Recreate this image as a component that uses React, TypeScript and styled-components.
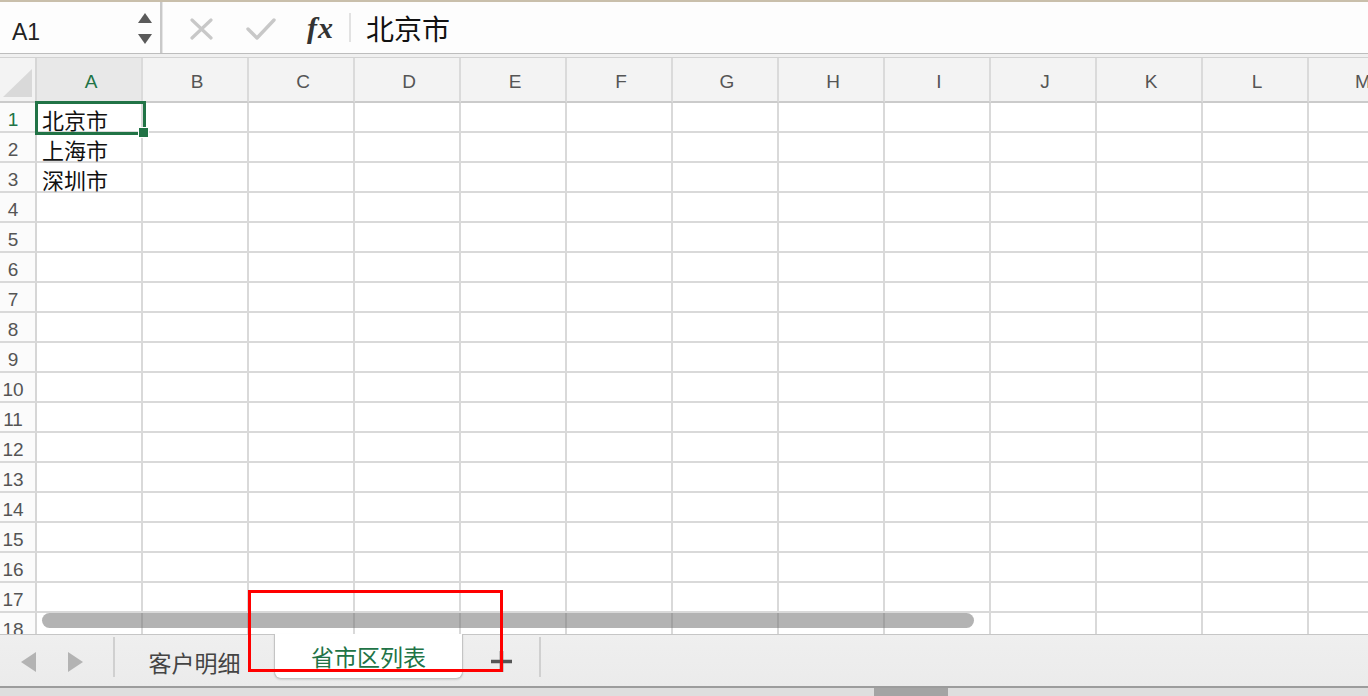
import React from "react";
import styled, { createGlobalStyle } from "styled-components";

const GREEN = "#217346";

const GlobalStyle = createGlobalStyle`
  html, body { margin: 0; padding: 0; background: #fff; overflow: hidden; }
  body { font-family: "Liberation Sans", "Noto Sans CJK SC", sans-serif; }
`;

const Window = styled.div`
  position: relative;
  width: 1368px;
  height: 696px;
  display: flex;
  flex-direction: column;
  overflow: hidden;
  background: #fff;
`;

const TopLine = styled.div`
  flex: none;
  height: 2px;
  background: #c9bfab;
`;

const FormulaBar = styled.div`
  flex: none;
  height: 51px;
  display: flex;
  align-items: center;
  background: #fdfdfd;
`;

const NameBox = styled.div`
  width: 160px;
  height: 100%;
  box-sizing: border-box;
  display: flex;
  align-items: center;
  justify-content: space-between;
  padding: 0 8px 0 12px;
`;

const NameText = styled.span`
  font-family: "Liberation Sans", sans-serif;
  font-size: 23px;
  color: #222;
  padding-top: 10px;
`;

const Stepper = styled.div`
  display: flex;
  flex-direction: column;
  gap: 11px;
  padding-top: 2px;
`;

const NameDivider = styled.div`
  width: 3px;
  height: 100%;
  background: #c9c9c9;
  border-right: 1px solid #e6e6e6;
  box-sizing: border-box;
`;

const ToolIcon = styled.span<{ $gap: number }>`
  display: flex;
  align-items: center;
  margin-left: ${(p) => p.$gap}px;
  padding-top: 3px;
`;

const FxLabel = styled.span`
  margin-left: 31px;
  font-family: "Liberation Serif", "DejaVu Serif", serif;
  font-style: italic;
  font-weight: 700;
  font-size: 30px;
  color: #333;
  letter-spacing: 1px;
`;

const FxDivider = styled.div`
  width: 2px;
  height: 29px;
  margin-left: 15px;
  background: #e2e2e2;
`;

const FormulaText = styled.div`
  margin-left: 15px;
  font-family: "Noto Sans CJK SC", sans-serif;
  font-size: 28px;
  color: #111;
`;

const BarSeparator = styled.div`
  flex: none;
  height: 5px;
  box-sizing: border-box;
  border-top: 1px solid #bdbdbd;
  border-bottom: 1px solid #d2d2d2;
  background: #f0f0f0;
`;

const GridArea = styled.div`
  position: relative;
  flex: 1;
  min-height: 0;
  overflow: hidden;
`;

const Sheet = styled.div`
  display: grid;
  grid-template-columns: 37px repeat(13, 106px);
  grid-template-rows: 45px repeat(18, 30px);
`;

const Corner = styled.div`
  position: relative;
  background: #f3f3f3;
  border-right: 2px solid #d6d6d6;
  border-bottom: 2px solid #cbcbcb;
`;

const CornerTriangle = styled.div`
  position: absolute;
  right: 3px;
  bottom: 4px;
  width: 29px;
  height: 28px;
  background: #d9d9d9;
  clip-path: polygon(100% 0, 100% 100%, 0 100%);
`;

const ColHeader = styled.div<{ $active?: boolean }>`
  display: flex;
  align-items: center;
  justify-content: center;
  padding: 5px 0 0 4px;
  box-sizing: border-box;
  background: ${(p) => (p.$active ? "#e8e8e8" : "#f3f3f3")};
  border-right: 2px solid #dadada;
  border-bottom: 2px solid #cbcbcb;
  font-family: "Liberation Sans", sans-serif;
  font-size: 19px;
  color: ${(p) => (p.$active ? GREEN : "#555")};
`;

const RowHeader = styled.div<{ $active?: boolean }>`
  display: flex;
  align-items: center;
  justify-content: center;
  padding: 5px 9px 0 0;
  box-sizing: border-box;
  background: #fbfbfb;
  border-right: 2px solid #d6d6d6;
  border-bottom: 2px solid #d9d9d9;
  font-family: "Liberation Sans", sans-serif;
  font-size: 19px;
  color: ${(p) => (p.$active ? GREEN : "#555")};
  white-space: nowrap;
`;

const Cell = styled.div`
  display: flex;
  align-items: center;
  padding: 3px 0 0 5px;
  box-sizing: border-box;
  border-right: 2px solid #d9d9d9;
  border-bottom: 2px solid #d9d9d9;
  font-family: "Noto Sans CJK SC", sans-serif;
  font-size: 22px;
  color: #111;
  white-space: nowrap;
`;

const Selection = styled.div`
  position: absolute;
  left: 35px;
  top: 43px;
  width: 111px;
  height: 34px;
  box-sizing: border-box;
  border: 3px solid ${GREEN};
  pointer-events: none;
`;

const FillHandle = styled.div`
  position: absolute;
  left: 139px;
  top: 70px;
  width: 9px;
  height: 9px;
  background: ${GREEN};
  box-shadow: 0 0 0 1px #fff;
`;

const HScroll = styled.div`
  position: absolute;
  left: 42px;
  top: 555px;
  width: 932px;
  height: 15px;
  border-radius: 8px;
  background: rgba(110, 110, 110, 0.52);
`;

const TabBar = styled.div`
  flex: none;
  height: 52px;
  box-sizing: border-box;
  border-top: 1px solid #c6c6c6;
  background: linear-gradient(#efefef, #ebebeb);
  display: flex;
  align-items: stretch;
`;

const NavArrows = styled.div`
  width: 113px;
  box-sizing: border-box;
  padding: 2px 0 0 21px;
  display: flex;
  align-items: center;
  gap: 32px;
`;

const TabDivider = styled.div`
  width: 2px;
  margin: 2px 0 9px;
  background: #d0d0d0;
`;

const SheetTab = styled.div<{ $active?: boolean; $width: number }>`
  width: ${(p) => p.$width}px;
  box-sizing: border-box;
  display: flex;
  align-items: center;
  justify-content: center;
  font-family: "Noto Sans CJK SC", sans-serif;
  font-size: 23px;
  color: ${(p) => (p.$active ? GREEN : "#444")};
  ${(p) =>
    p.$active
      ? `
    background: #fff;
    margin: -1px 0 7px;
    border: 1px solid #c4c4c4;
    border-top: none;
    border-radius: 0 0 7px 7px;
    box-shadow: 0 1px 2px rgba(0,0,0,0.12);
  `
      : `padding-top: 2px;`}
`;

const AddButton = styled.div`
  width: 76px;
  display: flex;
  align-items: center;
  justify-content: center;
  padding-top: 2px;
`;

const StatusStrip = styled.div`
  flex: none;
  height: 10px;
  box-sizing: border-box;
  border-top: 2px solid #9c9c9c;
  background: #dedede;
  display: flex;
  padding-left: 874px;
`;

const Thumb = styled.div`
  width: 74px;
  background: #a4a4a4;
`;

const Highlight = styled.div`
  position: absolute;
  left: 248px;
  top: 590px;
  width: 255px;
  height: 82px;
  box-sizing: border-box;
  border: 3px solid #ff0000;
  pointer-events: none;
`;

const COLS = "ABCDEFGHIJKLM".split("");
const ROWS = Array.from({ length: 18 }, (_, i) => i + 1);
const DATA: Record<number, string> = { 1: "北京市", 2: "上海市", 3: "深圳市" };

export default function App() {
  return (
    <>
      <GlobalStyle />
      <Window>
        <TopLine />
        <FormulaBar>
          <NameBox>
            <NameText>A1</NameText>
            <Stepper>
              <svg width="14" height="10" viewBox="0 0 14 10">
                <polygon points="7,0 14,10 0,10" fill="#5a5a5a" />
              </svg>
              <svg width="14" height="10" viewBox="0 0 14 10">
                <polygon points="0,0 14,0 7,10" fill="#5a5a5a" />
              </svg>
            </Stepper>
          </NameBox>
          <NameDivider />
          <ToolIcon $gap={27}>
            <svg width="23" height="22" viewBox="0 0 23 22">
              <path d="M2 2 L21 20 M21 2 L2 20" stroke="#c8c8c8" strokeWidth="3.2" strokeLinecap="round" />
            </svg>
          </ToolIcon>
          <ToolIcon $gap={33}>
            <svg width="30" height="22" viewBox="0 0 30 22">
              <path d="M2 11 L11 20 L28 2" stroke="#c8c8c8" strokeWidth="3.4" fill="none" strokeLinecap="round" strokeLinejoin="round" />
            </svg>
          </ToolIcon>
          <FxLabel>fx</FxLabel>
          <FxDivider />
          <FormulaText>北京市</FormulaText>
        </FormulaBar>
        <BarSeparator />
        <GridArea>
          <Sheet>
            <Corner>
              <CornerTriangle />
            </Corner>
            {COLS.map((c) => (
              <ColHeader key={c} $active={c === "A"}>
                {c}
              </ColHeader>
            ))}
            {ROWS.map((r) => (
              <React.Fragment key={r}>
                <RowHeader $active={r === 1}>{r}</RowHeader>
                {COLS.map((c) => (
                  <Cell key={c}>{c === "A" ? DATA[r] ?? "" : ""}</Cell>
                ))}
              </React.Fragment>
            ))}
          </Sheet>
          <Selection />
          <FillHandle />
          <HScroll />
        </GridArea>
        <TabBar>
          <NavArrows>
            <svg width="15" height="20" viewBox="0 0 15 20">
              <polygon points="15,0 15,20 0,10" fill="#b3b3b3" />
            </svg>
            <svg width="15" height="20" viewBox="0 0 15 20">
              <polygon points="0,0 15,10 0,20" fill="#b3b3b3" />
            </svg>
          </NavArrows>
          <TabDivider />
          <SheetTab $width={159}>客户明细</SheetTab>
          <SheetTab $width={189} $active>
            省市区列表
          </SheetTab>
          <AddButton>
            <svg width="21" height="21" viewBox="0 0 21 21">
              <path d="M0 10.5 H21 M10.5 0 V21" stroke="#555" strokeWidth="3.5" />
            </svg>
          </AddButton>
          <TabDivider />
        </TabBar>
        <StatusStrip>
          <Thumb />
        </StatusStrip>
        <Highlight />
      </Window>
    </>
  );
}
